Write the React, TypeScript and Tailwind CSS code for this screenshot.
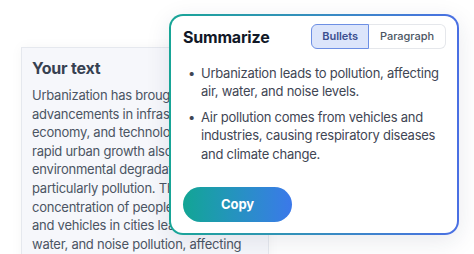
import React from "react";

const lines = [
  "Urbanization has brought significant",
  "advancements in infrastructure and the",
  "economy, and technology. However,",
  "rapid urban growth also leads to",
  "environmental degradation,",
  "particularly pollution. The high",
  "concentration of people, industries,",
  "and vehicles in cities leads to air,",
  "water, and noise pollution, affecting",
];

export default function App() {
  return (
    <div
      className="relative w-[474px] h-[254px] overflow-hidden bg-white"
      style={{ fontFamily: "Inter, 'Noto Sans', sans-serif" }}
    >
      <div className="ml-[21px] mt-[47px] w-[248px] h-[230px] overflow-hidden border border-[#e5e8ee] bg-[#f6f7fb] px-[10px] pt-[8px] shadow-[0_0_12px_rgba(0,0,0,0.04)]">
        <div className="text-[16px] leading-[24px] font-bold tracking-[-0.2px] text-[#374151]">Your text</div>
        <div className="mt-[6px] text-[13px] leading-[18.6px] tracking-[-0.25px] text-[#4b5563]">
          {lines.map((l) => (
            <div key={l} className="whitespace-nowrap">{l}</div>
          ))}
        </div>
      </div>

      <div className="absolute left-[169px] top-[14px] w-[290px] h-[221px] rounded-[14px] bg-gradient-to-r from-[#17a596] to-[#4a6fe3] p-[2px] shadow-[0_6px_24px_rgba(30,40,80,0.10)]">
        <div className="h-full w-full rounded-[12px] bg-white pl-[12px] pr-[11px] pt-[8px]">
          <div className="flex items-center justify-between">
            <div className="text-[16px] leading-[24px] font-bold tracking-[-0.2px] text-[#111827]">Summarize</div>
            <div className="flex h-[25px] text-[11px] font-medium tracking-[-0.05px]">
              <div className="flex items-center rounded-l-[6px] border border-[#6d8fe4] bg-[#dce5fb] px-[10px] text-[#3b4f8f] font-semibold">
                Bullets
              </div>
              <div className="flex items-center rounded-r-[6px] border border-l-0 border-[#e5e7eb] bg-white px-[11px] text-[#4b5563]">
                Paragraph
              </div>
            </div>
          </div>
          <ul className="mt-[15px] text-[13px] leading-[18.4px] tracking-[-0.25px] text-[#3f4654] whitespace-nowrap">
            <li className="flex">
              <span className="w-[18px] pl-[5px]">•</span>
              <span>
                Urbanization leads to pollution, affecting
                <br />
                air, water, and noise levels.
              </span>
            </li>
            <li className="mt-[7px] flex">
              <span className="w-[18px] pl-[5px]">•</span>
              <span>
                Air pollution comes from vehicles and
                <br />
                industries, causing respiratory diseases
                <br />
                and climate change.
              </span>
            </li>
          </ul>
          <button className="mt-[24px] flex h-[35px] w-[109px] items-center justify-center rounded-full bg-gradient-to-r from-[#12a594] to-[#3b78ea] text-[13px] font-bold tracking-[-0.1px] text-white">
            Copy
          </button>
        </div>
      </div>
    </div>
  );
}
